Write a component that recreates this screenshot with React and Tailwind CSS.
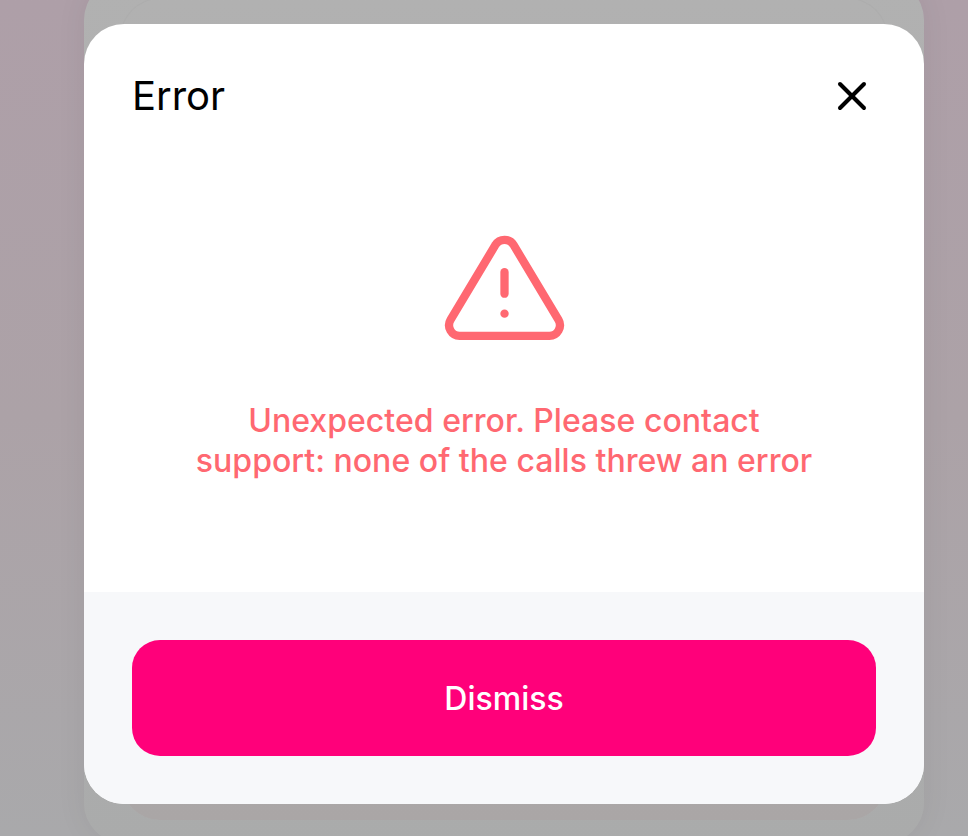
export default function App() {
  return (
    <div className="relative h-[836px] w-full overflow-hidden bg-gradient-to-b from-[#ae9fa8] via-[#aca2a7] to-[#a9a9ab] font-['Inter',sans-serif]">
      <div className="absolute left-[84px] top-[-20px] h-[863px] w-[840px] rounded-[40px] bg-gradient-to-b from-[#b1b1b1] to-[#aaabab] shadow-[0_0_32px_rgba(0,0,0,0.06)]" />
      <div className="absolute left-[120px] top-[-2px] h-[822px] w-[768px] rounded-[40px] border border-[#adadad] border-b-0 bg-gradient-to-b from-[#b1b1b1] to-[#aaa6a6]" />
      <div className="relative flex h-full items-start pl-[84px] pt-6">
        <div className="flex h-[780px] w-[840px] flex-col overflow-hidden rounded-[40px] bg-white">
          <div className="flex items-center justify-between px-[48px] pt-[48px]">
            <span className="text-[40px] leading-[48px] text-black">Error</span>
            <svg width="48" height="48" viewBox="0 0 24 24" fill="none" stroke="#000" strokeWidth="2" strokeLinecap="round" strokeLinejoin="round">
              <path d="M18 6 6 18" />
              <path d="m6 6 12 12" />
            </svg>
          </div>
          <div className="flex flex-1 flex-col items-center pt-[105px]">
            <svg width="133" height="133" viewBox="0 0 24 24" fill="none" stroke="#ff6871" strokeWidth="1.5" strokeLinecap="round" strokeLinejoin="round">
              <path d="M12 8.5v3.9" />
              <path d="M10.363 3.591l-8.106 13.534a1.914 1.914 0 0 0 1.636 2.871h16.214a1.914 1.914 0 0 0 1.636 -2.87l-8.106 -13.536a1.914 1.914 0 0 0 -3.274 0z" />
              <path d="M12 16h.01" />
            </svg>
            <p className="mt-[43px] w-[640px] text-center text-[32px] font-[450] leading-[40px] tracking-[0.03px] text-[#ff6871]">
              Unexpected error. Please contact support: none of the calls threw an error
            </p>
          </div>
          <div className="bg-[#f7f8fa] p-12">
            <button className="flex h-[116px] w-full items-center justify-center rounded-[28px] bg-[#ff007a] pt-[2px] text-[32px] font-medium text-white">
              Dismiss
            </button>
          </div>
        </div>
      </div>
    </div>
  );
}
